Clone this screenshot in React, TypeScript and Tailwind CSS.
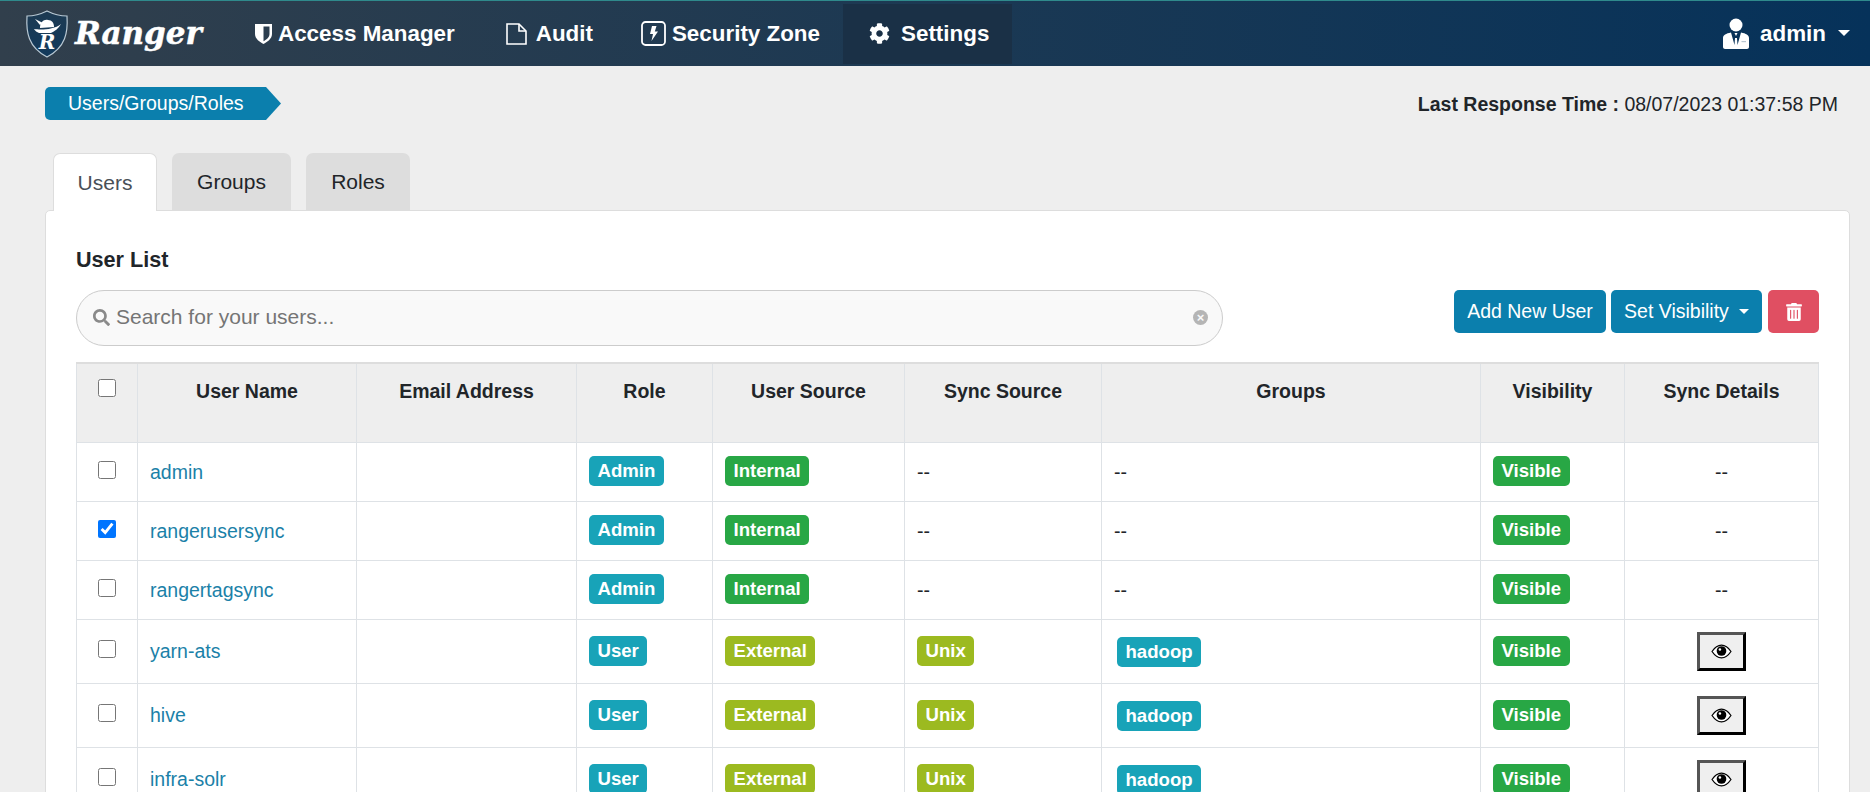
import React from "react";
import { FaCog, FaSearch, FaTrashAlt } from "react-icons/fa";

type Row = { name: string; role: string; source: string; sync: string; group: string; checked?: boolean };

const rows: Row[] = [
  { name: "admin", role: "Admin", source: "Internal", sync: "--", group: "--" },
  { name: "rangerusersync", role: "Admin", source: "Internal", sync: "--", group: "--", checked: true },
  { name: "rangertagsync", role: "Admin", source: "Internal", sync: "--", group: "--" },
  { name: "yarn-ats", role: "User", source: "External", sync: "Unix", group: "hadoop" },
  { name: "hive", role: "User", source: "External", sync: "Unix", group: "hadoop" },
  { name: "infra-solr", role: "User", source: "External", sync: "Unix", group: "hadoop" },
];

const Badge = ({ color, children, extra }: { color: string; children: React.ReactNode; extra?: string }) => (
  <span className={`inline-flex h-[30px] items-center rounded-[5px] px-[8.5px] text-[18.6px] font-bold text-white ${color} ${extra ?? ""}`}>
    {children}
  </span>
);

const Logo = () => (
  <svg width="44" height="48" viewBox="0 0 44 48" className="shrink-0">
    <defs>
      <linearGradient id="sh" x1="0" y1="0" x2="0" y2="1">
        <stop offset="0" stopColor="#1d3a52" />
        <stop offset="1" stopColor="#123a5c" />
      </linearGradient>
    </defs>
    <path d="M22 1 C28 4 36 6 42 6 C43 22 41 37 22 47 C3 37 1 22 2 6 C8 6 16 4 22 1Z" fill="url(#sh)" stroke="#b9c9d4" strokeWidth="1.2" />
    <path d="M9 19 C15 20 29 20 36 14 C33 19 30 21 26 23 L14 23 C12 22 10 21 9 19Z" fill="#fff" />
    <path d="M15 18 C15 12 19 9 23 10 C27 10 29 13 29 17Z" fill="#fff" />
    <path d="M10 9 L18 13 L15 15Z" fill="#fff" />
    <text x="22" y="39" textAnchor="middle" fontFamily="'DejaVu Serif', serif" fontWeight="700" fontStyle="italic" fontSize="20" fill="#fff">R</text>
  </svg>
);

const ShieldIcon = () => (
  <svg width="17" height="20" viewBox="0 0 17 20" className="shrink-0">
    <path fillRule="evenodd" d="M0 0H17V10C17 15 12 18 8.5 20C5 18 0 15 0 10ZM8.5 2.5V17.2C11 15.8 14.5 13.5 14.5 10V2.5Z" fill="#fff" />
  </svg>
);

const FileIcon = () => (
  <svg width="21" height="22" viewBox="0 0 21 22" fill="none" stroke="#fff" strokeWidth="1.6" className="shrink-0">
    <path d="M1 1H13L20 8V21H1Z" />
    <path d="M13 1V8H20" />
  </svg>
);

const ZoneIcon = () => (
  <svg width="25" height="25" viewBox="0 0 25 25" className="shrink-0">
    <rect x="1" y="1" width="23" height="23" rx="3.5" fill="none" stroke="#fff" strokeWidth="1.8" />
    <path d="M11 5H15.5L13.8 10.5H17L10.5 20L12 13H9Z" fill="#fff" />
  </svg>
);

const UserIcon = () => (
  <svg width="26" height="31" viewBox="0 0 26 31" className="shrink-0">
    <circle cx="13" cy="7" r="6.5" fill="#fff" />
    <path d="M0 20C0 17 3 15.5 8 14.5L11.5 27L12 20H14L14.5 27L18 14.5C23 15.5 26 17 26 20V29C26 30 25 31 24 31H2C1 31 0 30 0 29Z" fill="#fff" />
    <path d="M11.5 15H14.5L13 18Z" fill="#fff" />
    <rect x="18.5" y="23" width="4.5" height="1.2" fill="#b9c6d2" />
  </svg>
);

const EyeIcon = () => (
  <svg width="21" height="15" viewBox="0 0 20 14">
    <path d="M1 7C4 2.5 7 1 10 1C13 1 16 2.5 19 7C16 11.5 13 13 10 13C7 13 4 11.5 1 7Z" fill="#fff" stroke="#000" strokeWidth="1.2" />
    <circle cx="10" cy="6.5" r="4.6" fill="#000" />
    <circle cx="8.5" cy="5" r="1.2" fill="#fff" />
  </svg>
);

const NavItem = ({ icon, label, active, cls }: { icon: React.ReactNode; label: string; active?: boolean; cls: string }) => (
  <div className={`flex h-[60px] items-center pr-[23px] ${cls} ${active ? "bg-[#1a3046]" : ""}`}>
    {icon}
    <span className="text-[22.4px] font-bold text-white">{label}</span>
  </div>
);

const thClass = "border border-[#dee2e6] pt-[13px] align-top text-[19.5px] font-bold leading-[29px] text-[#212529]";

export default function App() {
  return (
    <div className="h-screen overflow-hidden bg-[#eeeeee] font-['Liberation_Sans',Arial,sans-serif] text-[19.5px] text-[#212529]">
      <header className="flex h-[66px] items-center border-t border-[#2f8a8c] bg-[linear-gradient(to_right,#313f4c,#06325a)]">
        <div className="flex w-[232px] items-center pl-[25px]">
          <Logo />
          <span className="ml-[6px] font-['DejaVu_Serif',serif] text-[31px] font-bold italic leading-none text-white [-webkit-text-stroke:0.5px_white]">Ranger</span>
        </div>
        <nav className="flex items-center">
          <NavItem icon={<ShieldIcon />} label="Access Manager" cls="pl-[23px] gap-[6px]" />
          <NavItem icon={<FileIcon />} label="Audit" cls="pl-[28px] gap-[9px]" />
          <NavItem icon={<ZoneIcon />} label="Security Zone" cls="pl-[25px] gap-[6px]" />
          <NavItem icon={<FaCog className="h-[21px] w-[21px] shrink-0 text-white" />} label="Settings" active cls="pl-[26px] gap-[11px]" />
        </nav>
        <div className="ml-auto flex items-center pr-[20px]">
          <UserIcon />
          <span className="ml-[11px] text-[22.4px] font-bold text-white">admin</span>
          <span className="ml-[12px] h-0 w-0 border-x-[6px] border-t-[6px] border-x-transparent border-t-white" />
        </div>
      </header>

      <div className="flex items-start justify-between pl-[45px] pr-[32px] pt-[21px]">
        <div className="flex h-[33px] w-[236px] items-center rounded-l-[5px] bg-[#0b7fad] pl-[23px] text-white [clip-path:polygon(0_0,calc(100%-15px)_0,100%_50%,calc(100%-15px)_100%,0_100%)]">
          Users/Groups/Roles
        </div>
        <div className="pt-[3px]">
          <span className="font-bold">Last Response Time : </span>
          08/07/2023 01:37:58 PM
        </div>
      </div>

      <div className="relative z-10 ml-[53px] mt-[33px] flex gap-[15px] text-[21px]">
        <div className="flex h-[58px] w-[104px] items-start justify-center rounded-t-[7px] border border-b-0 border-[#dddddd] bg-white pt-[13px] text-[#495057]">Users</div>
        <div className="flex h-[58px] w-[119px] items-start justify-center rounded-t-[7px] bg-[#dddddd] pt-[13px]">Groups</div>
        <div className="flex h-[58px] w-[104px] items-start justify-center rounded-t-[7px] bg-[#dddddd] pt-[13px]">Roles</div>
      </div>

      <main className="ml-[45px] mt-[-1px] w-[1805px] rounded-t-[5px] border border-[#dddddd] bg-white px-[30px] pt-[35px]">
        <h2 className="text-[21.6px] font-bold leading-[28px]">User List</h2>
        <div className="mt-[16px] flex items-start justify-between">
          <div className="flex h-[56px] w-[1147px] items-center rounded-full border border-[#cccccc] bg-[#f9f9f9] pb-[2px] pl-[16px] pr-[14px]">
            <FaSearch className="h-[17px] w-[17px] shrink-0 text-[#8a8a8a]" />
            <span className="ml-[6px] text-[21px] text-[#757575]">Search for your users...</span>
            <span className="ml-auto flex h-[15px] w-[15px] items-center justify-center rounded-full bg-[#b5b5b5] text-[13px] font-bold leading-none text-[#f9f9f9]">×</span>
          </div>
          <div className="flex gap-[5px]">
            <button className="h-[43px] w-[152px] rounded-[5px] bg-[#0b7fad] text-white">Add New User</button>
            <button className="flex h-[43px] w-[151px] items-center justify-center gap-[10px] rounded-[5px] bg-[#0b7fad] text-white">
              Set Visibility
              <span className="h-0 w-0 border-x-[5px] border-t-[5px] border-x-transparent border-t-white" />
            </button>
            <button className="ml-[1px] flex h-[43px] w-[51px] items-center justify-center rounded-[5px] bg-[#e04f62] text-white">
              <FaTrashAlt className="h-[18px] w-[16px]" />
            </button>
          </div>
        </div>

        <table className="mt-[16px] w-[1742px] table-fixed border-collapse">
          <thead>
            <tr className="h-[79px] border-t-[2px] border-[#dddddd] bg-[#eeeeee]">
              <th className={`w-[61px] ${thClass}`}>
                <input type="checkbox" className="mt-[2px] h-[18px] w-[18px] align-top" readOnly />
              </th>
              <th className={`w-[219px] ${thClass}`}>User Name</th>
              <th className={`w-[220px] ${thClass}`}>Email Address</th>
              <th className={`w-[136px] ${thClass}`}>Role</th>
              <th className={`w-[192px] ${thClass}`}>User Source</th>
              <th className={`w-[197px] ${thClass}`}>Sync Source</th>
              <th className={`w-[379px] ${thClass}`}>Groups</th>
              <th className={`w-[144px] ${thClass}`}>Visibility</th>
              <th className={`w-[194px] ${thClass}`}>Sync Details</th>
            </tr>
          </thead>
          <tbody>
            {rows.map((r) => {
              const external = r.source === "External";
              const badgeTd = `border border-[#dee2e6] px-[12px] align-top ${external ? "pt-[16px]" : "pt-[13px]"}`;
              const textTd = `border border-[#dee2e6] px-[12px] align-top leading-[29px] ${external ? "pt-[17px]" : "pt-[15px]"}`;
              return (
                <tr key={r.name} className={external ? "h-[64px]" : "h-[59px]"}>
                  <td className={`border border-[#dee2e6] text-center align-top ${external ? "pt-[20px]" : "pt-[18px]"}`}>
                    <input type="checkbox" className="h-[18px] w-[18px] align-top" checked={!!r.checked} readOnly />
                  </td>
                  <td className={textTd}>
                    <a className="text-[#1b81a8]">{r.name}</a>
                  </td>
                  <td className={textTd} />
                  <td className={badgeTd}>
                    <Badge color="bg-[#18a3b8]">{r.role}</Badge>
                  </td>
                  <td className={badgeTd}>
                    <Badge color={external ? "bg-[#9cba20]" : "bg-[#28a745]"}>{r.source}</Badge>
                  </td>
                  {external ? (
                    <td className={badgeTd}>
                      <Badge color="bg-[#9cba20]">{r.sync}</Badge>
                    </td>
                  ) : (
                    <td className={textTd}>{r.sync}</td>
                  )}
                  {external ? (
                    <td className={`${badgeTd} pl-[15px]`}>
                      <Badge color="bg-[#18a3b8]" extra="mt-[1px]">{r.group}</Badge>
                    </td>
                  ) : (
                    <td className={textTd}>{r.group}</td>
                  )}
                  <td className={badgeTd}>
                    <Badge color="bg-[#28a745]">Visible</Badge>
                  </td>
                  {external ? (
                    <td className="border border-[#dee2e6] pt-[12px] text-center align-top">
                      <button className="inline-flex h-[39px] w-[49px] items-center justify-center border-[3px] border-b-black border-l-[#555555] border-r-black border-t-[#555555] bg-[#efefef]">
                        <EyeIcon />
                      </button>
                    </td>
                  ) : (
                    <td className={`${textTd} text-center`}>--</td>
                  )}
                </tr>
              );
            })}
          </tbody>
        </table>
      </main>
    </div>
  );
}
